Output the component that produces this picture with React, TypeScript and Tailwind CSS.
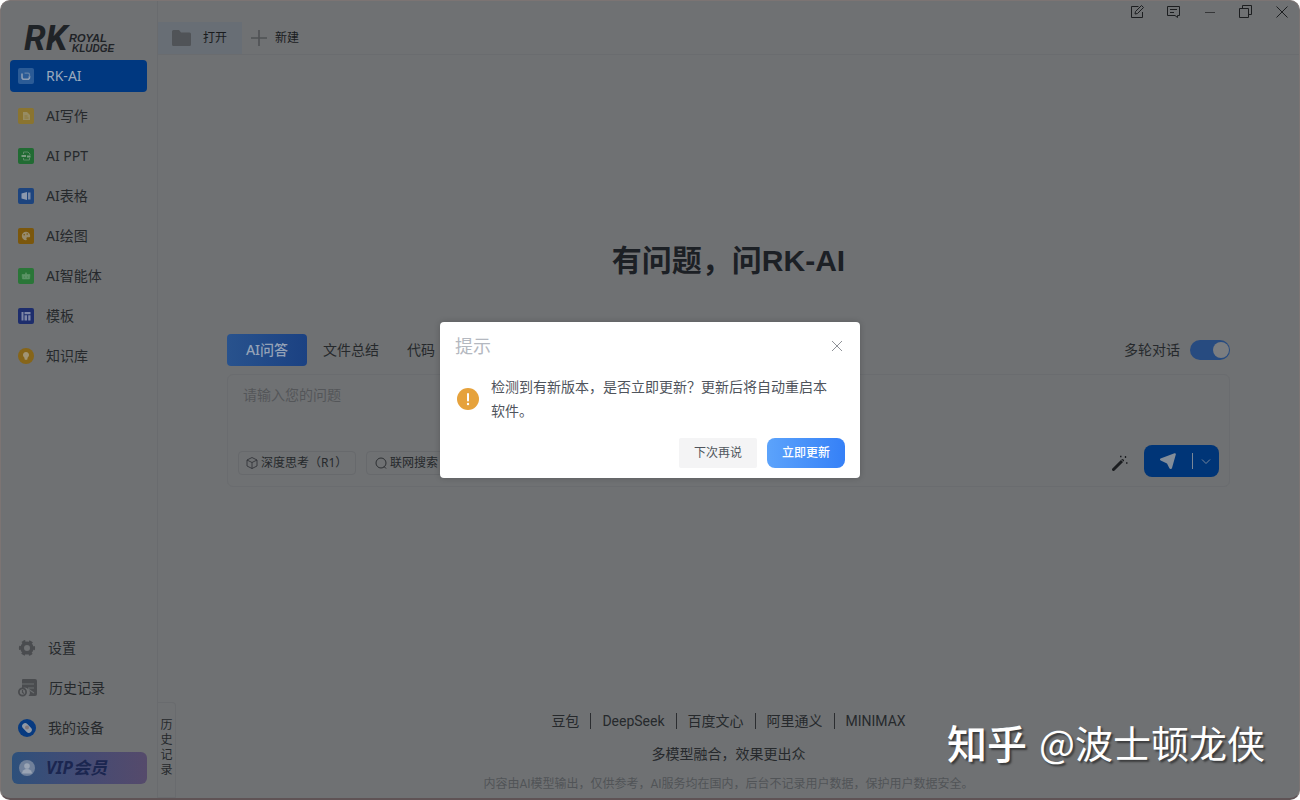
import React from 'react';

type NavItem = { label: string; icon: React.ReactNode };

const Tile = ({ fill, round, children }: { fill: string; round?: boolean; children?: React.ReactNode }) => (
  <svg width="16" height="16" viewBox="0 0 16 16" className="shrink-0" aria-hidden="true">
    <rect width="16" height="16" rx={round ? 8 : 2} fill={fill} />
    {children}
  </svg>
);

const navItems: NavItem[] = [
  {
    label: 'RK-AI',
    icon: (
      <Tile fill="#2b5b96">
        <path d="M4 5.500v3.700a2 2 0 0 0 2 2h3.500a2 2 0 0 0 2-2V8" stroke="#8c9db4" strokeWidth="1.600" fill="none" />
        <path d="M6.500 5.200h3.500a1.500 1.500 0 0 1 1.500 1.500v2" stroke="#6482a8" strokeWidth="1.300" fill="none" />
      </Tile>
    ),
  },
  {
    label: 'AI写作',
    icon: (
      <Tile fill="#8a7430">
        <path d="M5 4h4l3 3v5H5z" fill="#978c63" />
        <path d="M6.500 8h3M6.500 10h4" stroke="#8a7430" strokeWidth=".8" />
      </Tile>
    ),
  },
  {
    label: 'AI PPT',
    icon: (
      <Tile fill="#216b33">
        <path d="M5.500 6V4h4.500l2 2v1M5.500 10v2h6v-2" stroke="#5f8a68" strokeWidth="1" fill="none" />
        <path d="M3.500 8h4.500M9 8.500h3.500" stroke="#7b9b82" strokeWidth="2" />
      </Tile>
    ),
  },
  {
    label: 'AI表格',
    icon: (
      <Tile fill="#1d447e">
        <path d="M3.500 5.500 9 4v8l-5.500-1.500z" fill="#8b98ad" />
        <path d="M10 4.500h2.500v7H10z" fill="#7888a3" />
      </Tile>
    ),
  },
  {
    label: 'AI绘图',
    icon: (
      <Tile fill="#7b570c">
        <path d="M8 3.800a4.200 4.200 0 1 0 0 8.400c1 0 .8-.9.500-1.500-.4-.9.300-1.500 1.200-1.500h1.300c.8 0 1.200-.6 1.200-1.300C12.200 5.500 10.300 3.800 8 3.800z" fill="#968a6c" />
        <circle cx="6.200" cy="6.800" r=".8" fill="#7b570c" />
        <circle cx="9.200" cy="6" r=".8" fill="#7b570c" />
      </Tile>
    ),
  },
  {
    label: 'AI智能体',
    icon: (
      <Tile fill="#2a7638">
        <path d="M8 4.500 9 6.500h3L11.500 11h-7L4 6.500h3z" stroke="#5d9467" strokeWidth=".6" fill="#5d9467" strokeLinejoin="round" />
        <circle cx="6.500" cy="9" r=".6" fill="#3f8049" />
        <circle cx="9.500" cy="9" r=".6" fill="#3f8049" />
      </Tile>
    ),
  },
  {
    label: '模板',
    icon: (
      <Tile fill="#1d2d6c">
        <path d="M3.500 4h2v8.500h-2zM6.500 4h6v2.200h-6zM6.500 7.200h2.600v5.300H6.500zM10.200 7.200h2.300v5.300h-2.300z" fill="#7e87a6" />
      </Tile>
    ),
  },
  {
    label: '知识库',
    icon: (
      <Tile fill="#866519" round>
        <path d="M8 4a3 3 0 0 0-1.700 5.500l.5 2.300h2.400l.5-2.300A3 3 0 0 0 8 4z" fill="#a19474" />
      </Tile>
    ),
  },
];

const GearIcon = () => (
  <svg width="18" height="18" viewBox="0 0 18 18" aria-hidden="true">
    <circle cx="9" cy="9" r="4.800" fill="none" stroke="#4a4c4f" strokeWidth="3.600" />
    <circle cx="9" cy="9" r="7" fill="none" stroke="#4a4c4f" strokeWidth="2.200" strokeDasharray="3.660 3.670" strokeDashoffset="-1.830" transform="rotate(-30 9 9)" />
  </svg>
);

const HistoryIcon = () => (
  <svg width="20" height="20" viewBox="0 0 20 20" aria-hidden="true">
    <path d="M5 1h12a2 2 0 0 1 2 2v13a2 2 0 0 1-2 2h-6.500a5 5 0 0 0-6.500-7.500V2a1 1 0 0 1 1-1z" fill="#4a4c4f" />
    <path d="M4 6h12M10 10h6M10 11l6 4" stroke="#6b6e70" strokeWidth="1.100" />
    <circle cx="4.500" cy="14" r="3.600" fill="none" stroke="#4a4c4f" strokeWidth="1.800" />
    <path d="M4.500 12v2.500l1.500 1" stroke="#4a4c4f" strokeWidth="1.200" fill="none" />
  </svg>
);

const DeviceIcon = () => (
  <svg width="18" height="18" viewBox="0 0 18 18" aria-hidden="true">
    <circle cx="9" cy="9" r="9" fill="#073a80" />
    <path d="M7.200 7.200l3.600 3.600" stroke="#8f98a5" strokeWidth="6" strokeLinecap="round" />
    <circle cx="9" cy="8.500" r="2" fill="#80767a" />
  </svg>
);

const Logo = () => (
  <svg width="94" height="42" viewBox="0 0 94 42" role="img" aria-label="Royal Kludge" fill="#1f2327">
    <text x="0" y="33" fontSize="35" fontWeight="700" fontStyle="italic" fontFamily="Roboto, sans-serif">RK</text>
    <text x="45" y="25" fontSize="11" fontWeight="700" fontStyle="italic" fontFamily="'Liberation Sans', sans-serif">ROYAL</text>
    <text x="48" y="35" fontSize="10" fontWeight="700" fontStyle="italic" fontFamily="'Liberation Sans', sans-serif">KLUDGE</text>
  </svg>
);

const Sidebar = () => (
  <aside className="flex w-[157px] shrink-0 flex-col border-r border-[#696b6e] pr-[10px] pl-[9px]">
    <div className="mt-4 mb-px ml-[14px]">
      <Logo />
    </div>
    <nav className="flex flex-col gap-2">
      {navItems.map((item, i) => (
        <button
          key={item.label}
          className={
            i === 0
              ? 'flex h-8 items-center gap-3 rounded bg-[#003880] px-2 text-[#9ba9bc]'
              : 'flex h-8 items-center gap-3 rounded px-2 text-[#26292c]'
          }
        >
          {item.icon}
          <span>{item.label}</span>
        </button>
      ))}
    </nav>
    <div className="mt-auto mb-[14px] flex flex-col gap-2">
      <button className="flex h-8 items-center gap-3 px-2"><GearIcon />设置</button>
      <button className="flex h-8 items-center gap-[11px] px-2"><HistoryIcon />历史记录</button>
      <button className="flex h-8 items-center gap-3 px-2"><DeviceIcon />我的设备</button>
      <button className="ml-[2px] flex h-8 items-center gap-[10px] rounded-md bg-linear-to-r from-[#2d507b] via-[#434b74] to-[#554a6b] px-[6px] text-[17px] font-bold text-[#1b2650] italic">
        <svg width="18" height="18" viewBox="0 0 18 18" aria-hidden="true">
          <circle cx="9" cy="9" r="8" fill="#70809a" />
          <circle cx="9" cy="7" r="2.800" fill="#9aa4b4" />
          <path d="M4 14.500a5 4.500 0 0 1 10 0z" fill="#9aa4b4" />
        </svg>
        VIP会员
      </button>
    </div>
  </aside>
);

const WindowControls = () => (
  <div className="flex items-center justify-end gap-5 pr-[9px] text-[#1c1e20]">
    <button aria-label="编辑">
      <svg width="16" height="16" viewBox="0 0 16 16" fill="none" stroke="currentColor">
        <path d="M8.500 2.500h-7v11h11V8M5 10l.5-2.500 6-6 2 2-6 6z" />
      </svg>
    </button>
    <button aria-label="反馈">
      <svg width="16" height="16" viewBox="0 0 16 16" fill="none" stroke="currentColor">
        <path d="M1.500 2.500h12v9h-2v2l-2.500-2H1.500zM4 5.500h7M4 8.500h4" />
      </svg>
    </button>
    <button aria-label="最小化">
      <svg width="16" height="16" viewBox="0 0 16 16" fill="none" stroke="currentColor" strokeOpacity=".7">
        <path d="M3 8.500h10" />
      </svg>
    </button>
    <button aria-label="还原">
      <svg width="16" height="16" viewBox="0 0 16 16" fill="none" stroke="currentColor">
        <path d="M1.500 4.500h9v9h-9zM4.500 4.500v-3h9v9h-3" />
      </svg>
    </button>
    <button aria-label="关闭">
      <svg width="16" height="16" viewBox="0 0 16 16" fill="none" stroke="currentColor">
        <path d="M2.500 2.500l11 11M13.500 2.500l-11 11" />
      </svg>
    </button>
  </div>
);

const TopBar = () => (
  <header className="border-b border-[#6a6c6f]">
    <div className="flex h-[21px] items-center pt-px">
      <div className="ml-auto"><WindowControls /></div>
    </div>
    <div className="flex h-8 text-xs text-[#1a1c1e]">
      <button className="flex w-[84px] items-center gap-3 bg-[#686e75] pl-[14px]">
        <svg width="19" height="16" viewBox="0 0 19 16" aria-hidden="true">
          <path d="M1.500 0h5.500l2 2.500h8.500A1.500 1.500 0 0 1 19 4v10.500a1.500 1.500 0 0 1-1.500 1.500h-16A1.500 1.500 0 0 1 0 14.500v-13A1.500 1.500 0 0 1 1.500 0z" fill="#505357" />
        </svg>
        打开
      </button>
      <button className="flex items-center gap-2 pl-[9px]">
        <svg width="16" height="16" viewBox="0 0 16 16" stroke="#4f5154" strokeWidth="1.600" aria-hidden="true">
          <path d="M8 0v16M0 8h16" />
        </svg>
        新建
      </button>
    </div>
  </header>
);

const Composer = () => (
  <section className="mx-[69px] mt-[50px]">
    <div className="flex h-8 items-center">
      <button className="h-8 w-20 rounded bg-linear-to-r from-[#28528d] to-[#1b4182] font-medium text-[#94a2b7]">AI问答</button>
      <button className="ml-4">文件总结</button>
      <button className="ml-7">代码</button>
      <label className="ml-auto flex items-center gap-[10px]">
        多轮对话
        <span className="flex h-5 w-10 items-center justify-end rounded-full bg-[#274b80] px-px">
          <input type="checkbox" role="switch" defaultChecked className="sr-only" />
          <span className="h-4 w-4 rounded-full bg-[#7b7d80]" />
        </span>
      </label>
    </div>
    <div className="mt-2 flex flex-col rounded-md border border-[#6a6c6f] pr-[10px] pb-[9px] pl-[10px]">
      <textarea
        aria-label="问题"
        placeholder="请输入您的问题"
        className="h-[70px] w-full resize-none bg-transparent px-[5px] pt-[10px] leading-5 outline-none placeholder:text-[#545659]"
      />
      <div className="flex items-center text-xs">
        <button className="mt-1 flex h-6 w-[118px] items-center gap-[3px] rounded border border-[#67696c] pl-[7px] whitespace-nowrap">
          <svg width="12" height="12" viewBox="0 0 12 12" fill="none" stroke="#2c2f32" strokeWidth=".8" className="shrink-0">
            <path d="M6 .5l5 2.500v6l-5 2.500L1 9V3zM1 3l5 2.500L11 3M6 5.500v6" />
          </svg>
          深度思考（R1）
        </button>
        <button className="mt-1 ml-[10px] flex h-6 items-center gap-[3px] rounded border border-[#67696c] px-2 whitespace-nowrap">
          <svg width="12" height="12" viewBox="0 0 12 12" fill="none" stroke="#2c2f32" className="shrink-0">
            <circle cx="6" cy="6" r="5" />
            <path d="M9 9.500l2 2" />
          </svg>
          联网搜索
        </button>
        <button aria-label="润色" className="mt-1 ml-auto">
          <svg width="16" height="16" viewBox="0 0 16 16" fill="none" stroke="#1b1d20">
            <path d="M1.500 14.500l9-9" strokeWidth="3" strokeLinecap="round" />
            <path d="M9 4.500l2.500 2.500" stroke="#6f7173" />
            <path d="M8 1.500h1.500M13.500 1v2M14 8h1.500" strokeWidth="1.300" />
          </svg>
        </button>
        <div className="ml-4 flex h-8 w-[75px] items-center rounded-lg bg-[#003577]">
          <button aria-label="发送" className="flex h-8 flex-1 items-center justify-center">
            <svg width="18" height="18" viewBox="0 0 18 18" aria-hidden="true">
              <path d="M1.500 6.500L15.500 1.300a1 1 0 0 1 1.300 1.300L13 16a1.400 1.400 0 0 1-2.600.3L8 11.500 1.700 8.600a1.200 1.200 0 0 1-.2-2.100z" fill="#838d99" />
            </svg>
          </button>
          <span className="h-4 w-px bg-[#7a8797]" />
          <button aria-label="更多" className="flex h-8 w-[26px] items-center justify-center">
            <svg width="10" height="10" viewBox="0 0 10 10" fill="none" stroke="#75859b">
              <path d="M1 3.500l4 4 4-4" />
            </svg>
          </button>
        </div>
      </div>
    </div>
  </section>
);

const models = ['豆包', 'DeepSeek', '百度文心', '阿里通义', 'MINIMAX'];

const Footer = () => (
  <footer className="mt-auto flex flex-col items-center pb-1 font-[Roboto,'Noto_Sans_CJK_SC',sans-serif]">
    <ul className="flex h-5 items-center">
      {models.map((m, i) => (
        <li key={m} className="flex items-center">
          {i > 0 && <span className="mx-[11px] h-4 w-px bg-[#2b2d30]" />}
          {m}
        </li>
      ))}
    </ul>
    <p className="mt-[13px] h-5 leading-5">多模型融合，效果更出众</p>
    <p className="mt-[10px] h-5 text-xs leading-5 text-[#515457]">
      内容由AI模型输出，仅供参考，AI服务均在国内，后台不记录用户数据，保护用户数据安全。
    </p>
  </footer>
);

const UpdateDialog = () => (
  <div className="absolute inset-0 flex items-center justify-center">
    <div
      role="alertdialog"
      aria-labelledby="dialog-title"
      className="w-[420px] rounded bg-white px-[15px] pt-3 pb-[10px] text-[#4f545c] shadow-[0_0_6px_rgba(0,0,0,0.2)]"
    >
      <div className="flex h-6 items-center justify-between">
        <h2 id="dialog-title" className="text-lg leading-6 text-[#b4b8c0]">提示</h2>
        <button aria-label="关闭">
          <svg width="16" height="16" viewBox="0 0 16 16" stroke="#8f9298">
            <path d="M3 3l10 10M13 3L3 13" />
          </svg>
        </button>
      </div>
      <div className="mt-[17px] flex items-center gap-3 pr-3 pl-[2px]">
        <svg width="22" height="22" viewBox="0 0 22 22" className="shrink-0" aria-hidden="true">
          <circle cx="11" cy="11" r="11" fill="#e6a23c" />
          <path d="M11 6v6.500" stroke="#fff" strokeWidth="2" strokeLinecap="round" />
          <circle cx="11" cy="16" r="1.200" fill="#fff" />
        </svg>
        <p className="leading-6">检测到有新版本，是否立即更新？更新后将自动重启本软件。</p>
      </div>
      <div className="mt-[15px] flex justify-end gap-[10px] text-xs">
        <button className="h-[30px] w-[78px] rounded-xs bg-[#f4f4f5]">下次再说</button>
        <button className="h-[30px] w-[78px] rounded-lg bg-linear-to-r from-[#5ca3fb] to-[#3580f7] font-medium text-white">立即更新</button>
      </div>
    </div>
  </div>
);

export default function App() {
  return (
    <div className="relative flex min-h-screen flex-col bg-white font-['Noto_Sans','Noto_Sans_CJK_SC',sans-serif] text-sm text-[#26292c]">
      <div className="flex flex-1 overflow-hidden rounded-[10px] border border-b-2 border-[#7c7473] border-b-[#5f5355] bg-[#6f7173]">
        <Sidebar />
        <div className="flex min-w-0 flex-1 flex-col">
          <TopBar />
          <main className="relative flex flex-1 flex-col">
            <h1 className="mt-[183px] text-center font-['Liberation_Sans','Noto_Sans_CJK_SC',sans-serif] text-[30px] leading-[46px] font-bold text-[#1c2025]">
              有问题，问RK-AI
            </h1>
            <Composer />
            <Footer />
            <button className="absolute bottom-0 left-0 flex h-24 w-[18px] items-center justify-center rounded-tr border border-l-0 border-[#696b6e] px-[2px] pb-[6px] text-xs leading-[15px]">
              历史记录
            </button>
          </main>
        </div>
      </div>
      <UpdateDialog />
      <div className="absolute right-[35px] bottom-[30px] flex items-center gap-3 font-['Noto_Sans_CJK_SC',sans-serif] text-[38px] leading-[56px] text-white [text-shadow:2px_2px_2px_rgba(0,0,0,0.5)]">
        <span className="text-[40px] font-medium">知乎</span>
        <span>@波士顿龙侠</span>
      </div>
    </div>
  );
}
